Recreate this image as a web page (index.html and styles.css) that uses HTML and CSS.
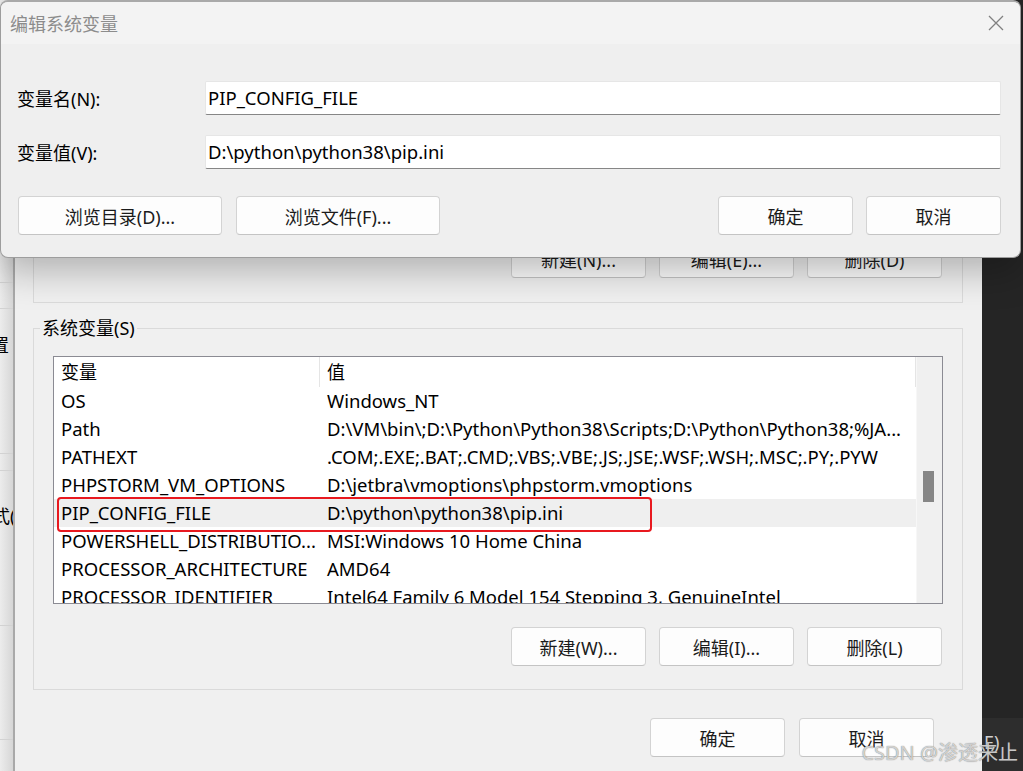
FILE: index.html
```html
<!DOCTYPE html>
<html lang="zh-CN">
<head>
    <meta charset="UTF-8">
    <title>编辑系统变量</title>
    <link rel="stylesheet" href="styles.css">
</head>
<body>
<div class="desktop">

    <!-- System properties window, only its right edge peeks out -->
    <div class="sys-props">
        <div class="sp-block sp-top"></div>
        <div class="sp-block sp-a"></div>
        <div class="sp-block sp-b"><span class="sp-text sp-text-1">置</span></div>
        <div class="sp-block sp-c"></div>
        <div class="sp-block sp-d"><span class="sp-text sp-text-2">式(</span></div>
        <div class="sp-block sp-e"></div>
    </div>

    <!-- Environment variables window -->
    <div class="env-window">
        <!-- user variables, mostly hidden under the dialog -->
        <div class="group user-group">
            <div class="list user-list"></div>
            <div class="btn-row">
                <button class="btn">新建(N)...</button>
                <button class="btn">编辑(E)...</button>
                <button class="btn">删除(D)</button>
            </div>
        </div>

        <div class="group sys-group">
            <div class="group-title">系统变量(S)</div>
            <div class="list">
                <div class="list-main">
                    <div class="list-head">
                        <div class="col-name">变量</div>
                        <div class="col-value">值</div>
                    </div>
                    <div class="row"><div class="col-name">OS</div><div class="col-value">Windows_NT</div></div>
                    <div class="row"><div class="col-name">Path</div><div class="col-value">D:\VM\bin\;D:\Python\Python38\Scripts;D:\Python\Python38;%JA...</div></div>
                    <div class="row"><div class="col-name">PATHEXT</div><div class="col-value">.COM;.EXE;.BAT;.CMD;.VBS;.VBE;.JS;.JSE;.WSF;.WSH;.MSC;.PY;.PYW</div></div>
                    <div class="row"><div class="col-name">PHPSTORM_VM_OPTIONS</div><div class="col-value">D:\jetbra\vmoptions\phpstorm.vmoptions</div></div>
                    <div class="row selected">
                        <div class="col-name">PIP_CONFIG_FILE</div><div class="col-value">D:\python\python38\pip.ini</div>
                        <div class="mark"></div>
                    </div>
                    <div class="row"><div class="col-name">POWERSHELL_DISTRIBUTIO...</div><div class="col-value">MSI:Windows 10 Home China</div></div>
                    <div class="row"><div class="col-name">PROCESSOR_ARCHITECTURE</div><div class="col-value">AMD64</div></div>
                    <div class="row"><div class="col-name">PROCESSOR_IDENTIFIER</div><div class="col-value">Intel64 Family 6 Model 154 Stepping 3, GenuineIntel</div></div>
                </div>
                <div class="scrollbar"><div class="thumb"></div></div>
            </div>
            <div class="btn-row">
                <button class="btn">新建(W)...</button>
                <button class="btn">编辑(I)...</button>
                <button class="btn">删除(L)</button>
            </div>
        </div>

        <div class="footer-row">
            <button class="btn">确定</button>
            <button class="btn">取消</button>
        </div>
    </div>

    <div class="dark-side"><div class="dark-bottom">E)</div></div>

    <!-- Edit system variable dialog -->
    <div class="dialog">
        <div class="title-bar">
            <span class="title">编辑系统变量</span>
            <svg class="close" width="16" height="16" viewBox="0 0 16 16">
                <path d="M1 1 L15 15 M15 1 L1 15" stroke="#808080" stroke-width="1.3" fill="none"/>
            </svg>
        </div>
        <div class="dialog-body">
            <div class="field">
                <label>变量名(N):</label>
                <div class="input">PIP_CONFIG_FILE</div>
            </div>
            <div class="field">
                <label>变量值(V):</label>
                <div class="input">D:\python\python38\pip.ini</div>
            </div>
            <div class="dialog-buttons">
                <div class="btn-group">
                    <button class="btn wide">浏览目录(D)...</button>
                    <button class="btn wide">浏览文件(F)...</button>
                </div>
                <div class="btn-group">
                    <button class="btn">确定</button>
                    <button class="btn">取消</button>
                </div>
            </div>
        </div>
    </div>

    <div class="watermark">CSDN @渗透来止</div>
</div>
</body>
</html>
```

FILE: styles.css
```css
html, body {
    margin: 0;
    padding: 0;
    overflow: hidden;
}

body {
    font-family: "Noto Sans", "Noto Sans CJK SC", sans-serif;
    font-size: 18px;
    color: #000;
    background: #262626;
}

.desktop {
    position: relative;
    display: flex;
    width: 1023px;
    height: 771px;
}

/* Window behind, left edge */
.sys-props {
    width: 13px;
    flex: none;
    overflow: hidden;
    background: linear-gradient(to right, #ececec, #d6d6d6);
}

.sp-block {
    box-sizing: border-box;
    border-bottom: 1px solid #d2d2d2;
    white-space: nowrap;
}

.sp-top { height: 283px; }
.sp-a { height: 26px; }
.sp-b { height: 145px; padding-top: 24px; }
.sp-c { height: 17px; }
.sp-d { height: 155px; padding-top: 33px; }
.sp-e { height: 114px; }

.sp-text {
    display: inline-block;
    line-height: 24px;
}

.sp-text-1 { margin-left: -9px; }
.sp-text-2 { margin-left: -8px; }

/* Environment variables window */
.env-window {
    width: 969px;
    flex: none;
    box-sizing: border-box;
    background: #f0f0f0;
    border-left: 2px solid #a9a9a9;
    padding: 28px 19px 0 18px;
}

.group {
    border: 1px solid #dadada;
    padding: 0 19px 23px 19px;
}

.user-group {
    padding-bottom: 24px;
}

.sys-group {
    margin-top: 25px;
}

.group-title {
    display: table;
    margin: -13px 0 0 -13px;
    padding: 0 2px;
    line-height: 24px;
    background: #f0f0f0;
}

.list {
    display: flex;
    margin-top: 16px;
    height: 248px;
    box-sizing: border-box;
    border: 1px solid #8b8b93;
    background: #fff;
    font-size: 18.5px;
}

.user-list {
    margin-top: 27px;
    height: 160px;
}

.list-main {
    flex: 1;
    overflow: hidden;
}

.list-head,
.row {
    display: flex;
    white-space: nowrap;
}

.list-head {
    height: 30px;
    line-height: 30px;
    border-right: 1px solid #e5e5e5;
    font-size: 18px;
}

.row {
    position: relative;
    height: 28px;
    line-height: 28px;
}

.row.selected {
    background: #efefef;
}

.col-name {
    width: 266px;
    flex: none;
    box-sizing: border-box;
    padding-left: 7px;
    overflow: hidden;
}

.list-head .col-name {
    border-right: 1px solid #e5e5e5;
}

.col-value {
    flex: 1;
    padding-left: 7px;
    overflow: hidden;
}

.mark {
    position: absolute;
    left: 3px;
    top: -2px;
    width: 595px;
    height: 35px;
    box-sizing: border-box;
    border: 2px solid #e8191f;
    border-radius: 4px;
}

.scrollbar {
    width: 26px;
    flex: none;
    background: #f0f0f0;
    border-left: 1px solid #f7f7f7;
    box-sizing: border-box;
}

.thumb {
    width: 11px;
    height: 31px;
    margin: 114px 0 0 6px;
    background: #868686;
}

.btn-row {
    display: flex;
    justify-content: flex-end;
    gap: 13px;
    margin-top: 23px;
    margin-right: 1px;
}

.footer-row {
    display: flex;
    justify-content: flex-end;
    gap: 14px;
    margin-top: 28px;
    padding-right: 29px;
}

.btn {
    width: 135px;
    height: 39px;
    box-sizing: border-box;
    padding: 0;
    font-family: inherit;
    font-size: 18px;
    color: #1b1b1b;
    background: #fdfdfd;
    border: 1px solid #d3d3d3;
    border-bottom-color: #c4c4c4;
    border-radius: 4px;
}

.btn.wide {
    width: 204px;
}

.dark-side {
    flex: 1;
    display: flex;
    flex-direction: column;
    background: #252525;
}

.dark-bottom {
    margin-top: auto;
    height: 53px;
    box-sizing: border-box;
    padding: 12px 0 0 2px;
    line-height: 24px;
    color: #d0d0d0;
    background: #2d2d2d;
    white-space: nowrap;
}

/* Dialog on top */
.dialog {
    position: absolute;
    top: 0;
    left: 0;
    width: 1021px;
    box-sizing: border-box;
    border: 1px solid #9d9d9d;
    border-top: 2px solid #a9a9a9;
    border-radius: 8px;
    background: #efefef;
    box-shadow: 0 14px 36px rgba(0, 0, 0, 0.26);
    overflow: hidden;
}

.title-bar {
    display: flex;
    justify-content: space-between;
    align-items: center;
    height: 42px;
    padding: 0 16px 0 9px;
    background: #f3f3f3;
}

.title {
    color: #8c8c8c;
}

.close {
    display: block;
}

.dialog-body {
    padding: 37px 19px 22px 16px;
}

.field {
    display: flex;
    align-items: center;
}

.field + .field {
    margin-top: 20px;
}

.field label {
    width: 188px;
    flex: none;
}

.input {
    flex: 1;
    height: 34px;
    line-height: 31px;
    box-sizing: border-box;
    padding-left: 2px;
    font-size: 18.5px;
    background: #fff;
    border: 1px solid #e6e6e6;
    border-bottom-color: #868686;
    border-radius: 2px;
}

.dialog-buttons {
    display: flex;
    justify-content: space-between;
    margin-top: 27px;
}

.btn-group {
    display: flex;
    gap: 13px;
}

.btn-group:first-child {
    gap: 14px;
    margin-left: 1px;
}

.watermark {
    position: absolute;
    right: 5px;
    bottom: 5px;
    font-size: 20px;
    color: rgba(235, 235, 235, 0.8);
    text-shadow: 0 0 1px rgba(80, 80, 80, 0.9);
    white-space: nowrap;
}
```
